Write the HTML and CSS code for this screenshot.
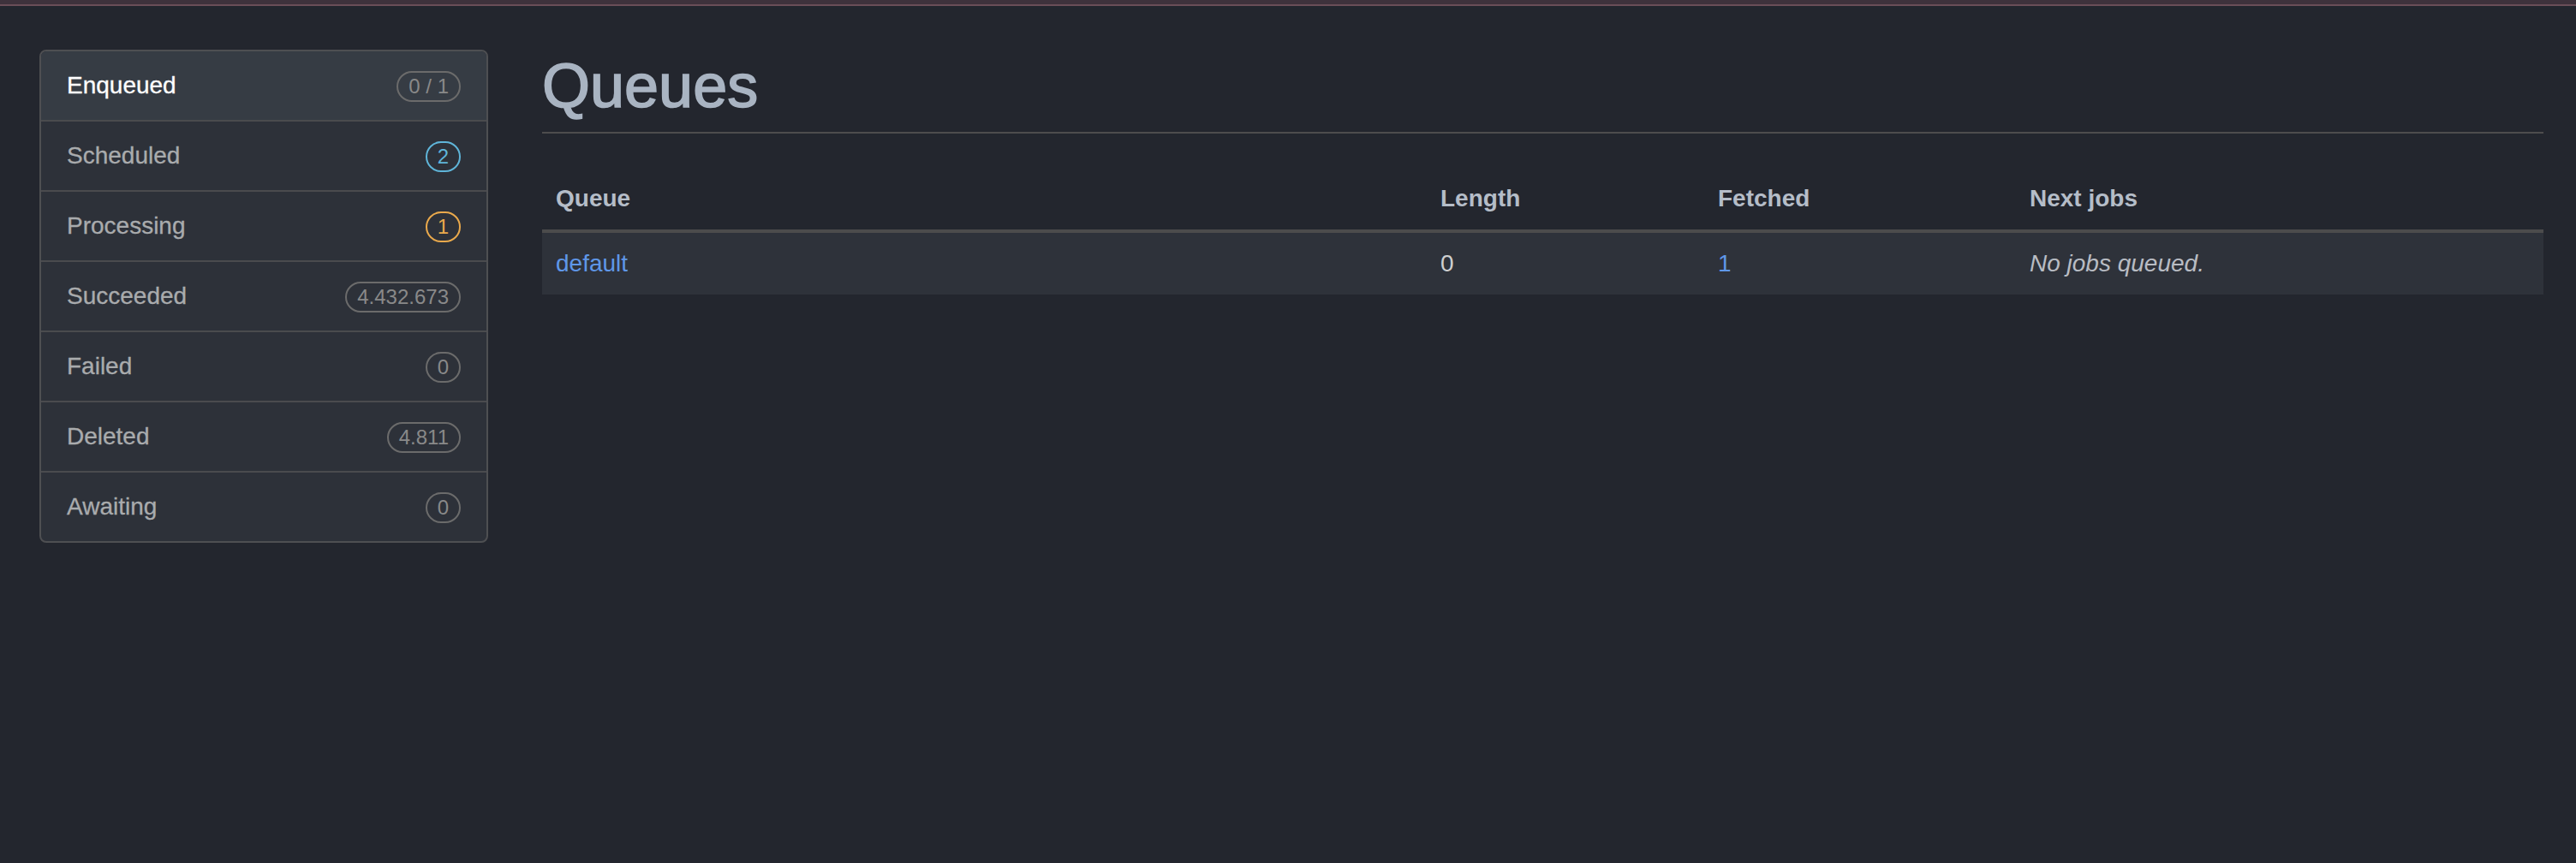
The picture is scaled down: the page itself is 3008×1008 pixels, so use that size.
FILE: index.html
```html
<!DOCTYPE html>
<html lang="en">
<head>
<meta charset="utf-8">
<title>Queues</title>
<link rel="stylesheet" href="styles.css">
</head>
<body>
<div class="topbar"></div>
<div class="page">
  <nav class="sidebar">
    <a class="item active" href="#"><span>Enqueued</span><span class="badge">0 / 1</span></a>
    <a class="item" href="#"><span>Scheduled</span><span class="badge info">2</span></a>
    <a class="item" href="#"><span>Processing</span><span class="badge warning">1</span></a>
    <a class="item" href="#"><span>Succeeded</span><span class="badge">4.432.673</span></a>
    <a class="item" href="#"><span>Failed</span><span class="badge">0</span></a>
    <a class="item" href="#"><span>Deleted</span><span class="badge">4.811</span></a>
    <a class="item" href="#"><span>Awaiting</span><span class="badge">0</span></a>
  </nav>
  <main class="main">
    <h1 class="page-header">Queues</h1>
    <table class="queues">
      <colgroup>
        <col class="c-queue">
        <col class="c-length">
        <col class="c-fetched">
        <col class="c-next">
      </colgroup>
      <thead>
        <tr><th>Queue</th><th>Length</th><th>Fetched</th><th>Next jobs</th></tr>
      </thead>
      <tbody>
        <tr>
          <td><a href="#">default</a></td>
          <td>0</td>
          <td><a href="#">1</a></td>
          <td><em>No jobs queued.</em></td>
        </tr>
      </tbody>
    </table>
  </main>
</div>
</body>
</html>
```
FILE: styles.css
```css
html, body {
  margin: 0;
  padding: 0;
}
body {
  background: #23262e;
  font-family: "Liberation Sans", Arial, Helvetica, sans-serif;
  font-size: 28px;
  line-height: 40px;
  color: #c8c8c8;
  height: 1008px;
  overflow: hidden;
}
.topbar {
  height: 5px;
  background: #3e323c;
  border-bottom: 2px solid #6a4e58;
}
.page {
  display: flex;
  align-items: flex-start;
  gap: 63px;
  padding: 51px 38px 0 46px;
}
.sidebar {
  flex: 0 0 524px;
  box-sizing: border-box;
  border: 2px solid #4e4f52;
  border-radius: 8px;
  background: #2d3139;
  overflow: hidden;
  display: flex;
  flex-direction: column;
}
.item {
  display: flex;
  align-items: center;
  justify-content: space-between;
  padding: 20px 30px;
  color: #a9abad;
  text-decoration: none;
  border-top: 2px solid #4a4b4e;
  -webkit-text-stroke: 0.3px currentColor;
}
.item:first-child {
  border-top: 0;
}
.item.active {
  background: #363c44;
  color: #ffffff;
}
.badge {
  font-size: 24px;
  line-height: 24px;
  padding: 4px 12px;
  border: 2px solid #6b6b6b;
  border-radius: 20px;
  color: #898989;
  margin-top: 2px;
  -webkit-text-stroke: 0;
}
.badge.info {
  border-color: #5fb5d9;
  color: #5fb5d9;
}
.badge.warning {
  border-color: #e9a94c;
  color: #e9a94c;
}
.main {
  flex: 1 1 auto;
  min-width: 0;
}
.page-header {
  margin: 0;
  font-size: 72px;
  font-weight: normal;
  line-height: 84px;
  color: #a9b4c2;
  padding-bottom: 12px;
  border-bottom: 2px solid #4d4d4d;
  -webkit-text-stroke: 1.6px #a9b4c2;
}
.queues {
  width: 100%;
  margin-top: 40px;
  border-collapse: collapse;
  table-layout: fixed;
}
.c-queue { width: 1033px; }
.c-length { width: 324px; }
.c-fetched { width: 364px; }
.c-next { width: auto; }
.queues th {
  text-align: left;
  font-weight: bold;
  color: #b5bdc8;
  padding: 16px;
  line-height: 40px;
  border-bottom: 4px solid #4c4c4c;
}
.queues td {
  padding: 16px;
  line-height: 40px;
  background: #2e323a;
  color: #cfcfcf;
}
.queues a {
  color: #5f97e8;
  text-decoration: none;
}
.queues em {
  color: #b8bcc3;
}
```
